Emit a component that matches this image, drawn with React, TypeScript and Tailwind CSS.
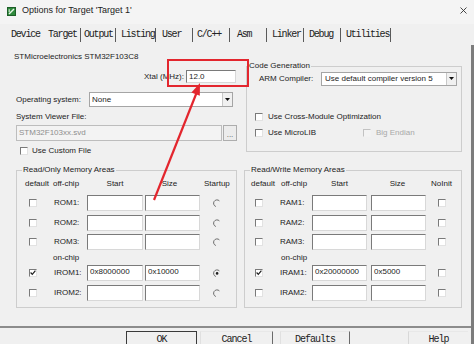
import clsx from 'clsx';

const SANS = "[font-family:'Liberation_Sans',Arial,sans-serif]";
const MONO = "[font-family:'Liberation_Mono','Courier_New',monospace]";

function Check({ checked, disabled }: { checked?: boolean; disabled?: boolean }) {
  return (
    <span
      className={clsx(
        'relative inline-block w-[8px] h-[8px] shrink-0 border',
        disabled
          ? 'border-t-[#c2c2c2] border-l-[#c2c2c2] border-r-[#f2f2f2] border-b-[#f2f2f2] bg-[#f3f3f3]'
          : 'border-t-[#7a7a7a] border-l-[#7a7a7a] border-r-[#e2e2e2] border-b-[#e2e2e2] bg-white'
      )}
    >
      {checked && (
        <svg className="absolute left-0 top-0" width="6" height="6" viewBox="0 0 6 6">
          <path d="M0.6 2.5 L2.3 4.4 L5.4 0.6" fill="none" stroke="#1f1f1f" strokeWidth="1.2" />
        </svg>
      )}
    </span>
  );
}

function Radio({ on }: { on?: boolean }) {
  return (
    <svg width="8" height="9" viewBox="0 0 8 9" className="shrink-0">
      <path d="M6.4 1.9 A3.4 3.4 0 1 0 2.84 7.5" fill="none" stroke="#6a6a6a" strokeWidth="1" />
      {on && <circle cx="4.1" cy="4.4" r="1.3" fill="#1f1f1f" />}
    </svg>
  );
}

function Field({ cls, value }: { cls: string; value?: string }) {
  return (
    <div
      className={clsx(
        cls,
        'h-[16px] shrink-0 bg-white border border-t-[#7a7a7a] border-l-[#7a7a7a] border-r-[#d8d8d8] border-b-[#d8d8d8] pl-[2px] leading-[12px] whitespace-nowrap overflow-hidden'
      )}
    >
      {value}
    </div>
  );
}

function Arrow() {
  return (
    <div className="w-[10px] h-full bg-[#f0f0f0] border-l border-[#c8c8c8] flex items-center justify-center">
      <svg width="5" height="3" viewBox="0 0 5 3">
        <path d="M0 0 H5 L2.5 3 Z" fill="#111" />
      </svg>
    </div>
  );
}

type RowData = {
  mt: string;
  name: string;
  start?: string;
  size?: string;
  def?: boolean;
  end?: boolean;
};

type GroupCfg = {
  box: string;
  legend: string;
  a: string;
  b: string;
  c: string;
  d: string;
  e: string;
  ha: string;
  hb: string;
  hd: string;
  he: string;
  ra: string;
  rb: string;
  re: string;
  last: string;
  radio: boolean;
  rows: RowData[];
  chip: RowData[];
};

function MemGroup({ g }: { g: GroupCfg }) {
  const row = (r: RowData) => (
    <div key={r.name} className={clsx('flex items-center h-[16px]', r.mt)}>
      <div className={clsx(g.a, g.ra, 'flex')}>
        <Check checked={r.def} />
      </div>
      <div className={clsx(g.b, g.rb)}>{r.name}</div>
      <Field cls={g.c} value={r.start} />
      <Field cls={g.d} value={r.size} />
      <div className={clsx(g.e, g.re, 'flex')}>{g.radio ? <Radio on={r.end} /> : <Check checked={r.end} />}</div>
    </div>
  );
  return (
    <fieldset className={clsx(g.box, 'border border-[#cdcdcd] p-0 m-0 pb-[6px]')}>
      <legend className="ml-[5px] px-[1px] h-[10px] leading-[10px]">{g.legend}</legend>
      <div className="flex h-[10px] leading-[10px] mt-[4px]">
        <div className={clsx(g.a, g.ha)}>default</div>
        <div className={clsx(g.b, g.hb)}>off-chip</div>
        <div className={clsx(g.c, 'text-center')}>Start</div>
        <div className={clsx(g.d, g.hd, 'text-center')}>Size</div>
        <div className={clsx(g.e, g.he)}>{g.last}</div>
      </div>
      {g.rows.map(row)}
      <div className="flex h-[10px] leading-[10px] mt-[3px]">
        <div className={g.a} />
        <div className={clsx(g.b, g.hb)}>on-chip</div>
      </div>
      {g.chip.map(row)}
    </fieldset>
  );
}

const roGroup: GroupCfg = {
  box: 'w-[221px]',
  legend: 'Read/Only Memory Areas',
  a: 'w-[34px] shrink-0',
  b: 'w-[36px] shrink-0',
  c: 'w-[56px]',
  d: 'w-[55px] ml-[2px]',
  e: 'w-[36px] shrink-0',
  ha: 'pl-[8px]',
  hb: 'pl-[2px]',
  hd: 'pr-[6px]',
  he: 'pl-[4px]',
  ra: 'pl-[12px]',
  rb: 'pl-[3px]',
  re: 'pl-[13px]',
  last: 'Startup',
  radio: true,
  rows: [
    { mt: 'mt-[6px]', name: 'ROM1:' },
    { mt: 'mt-[4px]', name: 'ROM2:' },
    { mt: 'mt-[3px]', name: 'ROM3:' },
  ],
  chip: [
    { mt: 'mt-[2px]', name: 'IROM1:', start: '0x8000000', size: '0x10000', def: true, end: true },
    { mt: 'mt-[4px]', name: 'IROM2:' },
  ],
};

const rwGroup: GroupCfg = {
  box: 'w-[218px]',
  legend: 'Read/Write Memory Areas',
  a: 'w-[31px] shrink-0',
  b: 'w-[36px] shrink-0',
  c: 'w-[55px]',
  d: 'w-[55px] ml-[4px]',
  e: 'w-[35px] shrink-0',
  ha: 'pl-[6px]',
  hb: 'pl-[5px]',
  hd: 'pr-[2px]',
  he: 'pl-[5px]',
  ra: 'pl-[10px]',
  rb: 'pl-[4px]',
  re: 'pl-[12px]',
  last: 'NoInit',
  radio: false,
  rows: [
    { mt: 'mt-[6px]', name: 'RAM1:' },
    { mt: 'mt-[4px]', name: 'RAM2:' },
    { mt: 'mt-[3px]', name: 'RAM3:' },
  ],
  chip: [
    { mt: 'mt-[2px]', name: 'IRAM1:', start: '0x20000000', size: '0x5000', def: true },
    { mt: 'mt-[4px]', name: 'IRAM2:' },
  ],
};

const tabs = [
  { label: 'Device', cls: 'w-[36px] pl-[3px]' },
  { label: 'Target', cls: 'w-[37px] pl-[4px] border-r border-[#5a5a5a]' },
  { label: 'Output', cls: 'w-[35px] pl-[3px] border-r border-[#5a5a5a]' },
  { label: 'Listing', cls: 'w-[40px] pl-[5px] border-r border-[#5a5a5a]' },
  { label: 'User', cls: 'w-[37px] pl-[6px] border-r border-[#5a5a5a]' },
  { label: 'C/C++', cls: 'w-[37px] pl-[4px] border-r border-[#5a5a5a]' },
  { label: 'Asm', cls: 'w-[37px] pl-[7px] border-r border-[#5a5a5a]' },
  { label: 'Linker', cls: 'w-[37px] pl-[5px] border-r border-[#5a5a5a]' },
  { label: 'Debug', cls: 'w-[37px] pl-[5px] border-r border-[#5a5a5a]' },
  { label: 'Utilities', cls: 'w-[50px] pl-[5px] border-r border-[#5a5a5a]' },
];

export default function App() {
  return (
    <div className={clsx(SANS, 'relative w-[474px] h-[344px] overflow-hidden bg-[#f0f0f0] text-[8px] text-[#1c1c1c]')}>
      {/* title bar */}
      <div className="h-[24px] flex items-center bg-[#f4f4f4]">
        <svg className="ml-[7px] mt-[-2px]" width="9" height="9" viewBox="0 0 9 9">
          <rect x="0.5" y="0.5" width="8" height="8" fill="#2f8a3c" stroke="#1d5e27" />
          <path d="M2 7 L7 2" stroke="#e8f5e8" strokeWidth="1.4" />
          <path d="M2.2 2.2 L2.2 5" stroke="#e8f5e8" strokeWidth="1" />
        </svg>
        <span className="ml-[6px] mt-[-3px] text-[9px] text-[#222]">Options for Target 'Target 1'</span>
        <svg className="ml-auto mr-[7px] mt-[-4px]" width="7" height="7" viewBox="0 0 7 7">
          <path d="M0.5 0.5 L6.5 6.5 M6.5 0.5 L0.5 6.5" stroke="#333" strokeWidth="0.9" />
        </svg>
      </div>

      {/* tabs */}
      <div className={clsx(MONO, 'h-[21px] flex items-center pl-[8px] text-[10px] tracking-[-1.2px] text-[#222]')}>
        {tabs.map((t) => (
          <div key={t.label} className={clsx(t.cls, 'h-[14px] leading-[14px] shrink-0')}>
            {t.label}
          </div>
        ))}
      </div>

      <div className="border-r-[3px] border-[#7c7c7c] h-[299px]">
        {/* upper section */}
        <div className="flex items-start h-[111px]">
          <div className="w-[221px] ml-[16px] shrink-0">
            <div className="mt-[6px] h-[12px] leading-[12px] ml-[-2px]">STMicroelectronics STM32F103C8</div>
            <div className="mt-[7px] h-[13px] flex items-center justify-end">
              <span className="mr-[2px]">Xtal (MHz):</span>
              <div className="w-[50px] h-[13px] mr-[1px] bg-white border border-t-[#7a7a7a] border-l-[#7a7a7a] border-r-[#d8d8d8] border-b-[#d8d8d8] pl-[2px] leading-[11px]">
                12.0
              </div>
            </div>
            <div className="mt-[9px] h-[15px] flex items-center">
              <span className="w-[73px] shrink-0">Operating system:</span>
              <div className="w-[144px] h-[15px] bg-white border border-[#a5a5a5] flex items-center">
                <span className="flex-1 pl-[2px]">None</span>
                <Arrow />
              </div>
            </div>
            <div className="mt-[5px] h-[10px] leading-[10px]">System Viewer File:</div>
            <div className="mt-[3px] h-[16px] flex">
              <div className="w-[206px] h-[16px] bg-[#f3f3f3] border border-[#bdbdbd] pl-[2px] leading-[14px] text-[#8e8e8e]">
                STM32F103xx.svd
              </div>
              <div className="w-[14px] h-[16px] ml-[1px] bg-[#ececec] border border-[#adadad] text-center leading-[18px] text-[#555]">
                ...
              </div>
            </div>
            <div className="mt-[5px] h-[10px] flex items-center pl-[4px]">
              <Check />
              <span className="ml-[4px]">Use Custom File</span>
            </div>
          </div>

          <fieldset className="ml-[9px] mt-[16px] w-[216px] border border-[#cdcdcd] p-0 m-0 pb-[13px]">
            <legend className="ml-[1px] px-[1px] h-[10px] leading-[10px]">Code Generation</legend>
            <div className="mt-[1px] h-[13px] flex items-center">
              <span className="w-[74px] pl-[12px] shrink-0">ARM Compiler:</span>
              <div className="w-[136px] h-[14px] bg-white border border-[#a5a5a5] flex items-center">
                <span className="flex-1 pl-[3px]">Use default compiler version 5</span>
                <Arrow />
              </div>
            </div>
            <div className="mt-[27px] h-[10px] flex items-center pl-[8px]">
              <Check />
              <span className="ml-[5px]">Use Cross-Module Optimization</span>
            </div>
            <div className="mt-[6px] h-[10px] flex items-center pl-[8px]">
              <div className="w-[108px] flex items-center shrink-0">
                <Check />
                <span className="ml-[5px]">Use MicroLIB</span>
              </div>
              <Check disabled />
              <span className="ml-[5px] text-[#a8a8a8]">Big Endian</span>
            </div>
          </fieldset>
        </div>

        {/* memory areas */}
        <div className="mt-[9px] flex items-start ml-[16px] gap-[7px]">
          <MemGroup g={roGroup} />
          <MemGroup g={rwGroup} />
        </div>

        <div className="mt-[18px] border-t-[2px] border-[#8c8c8c]" />

        {/* buttons */}
        <div className={clsx(MONO, 'mt-[3px] flex text-[10px] tracking-[-1px] text-[#222]')}>
          <div className="ml-[126px] w-[71px] h-[20px] border border-[#3a3a3a] text-center leading-[16px]">OK</div>
          <div className="ml-[3px] w-[73px] h-[20px] border border-t-[#e8e8e8] border-l-[#e0e0e0] border-r-[#6a6a6a] border-b-[#6a6a6a] text-center leading-[16px]">
            Cancel
          </div>
          <div className="ml-[7px] w-[70px] h-[20px] border border-t-[#e8e8e8] border-l-[#e0e0e0] border-r-[#6a6a6a] border-b-[#6a6a6a] text-center leading-[16px]">
            Defaults
          </div>
          <div className="ml-[58px] w-[60px] h-[20px] border border-t-[#e8e8e8] border-l-[#d8d8d8] border-r-0 border-b-[#6a6a6a] text-center leading-[16px]">
            Help
          </div>
        </div>
      </div>

      {/* red annotation overlay */}
      <div className="absolute left-[167px] top-[59px] w-[82px] h-[28px] border-2 border-[#e3262e] pointer-events-none" />
      <svg className="absolute left-0 top-0 pointer-events-none" width="474" height="344" viewBox="0 0 474 344">
        <line x1="154" y1="200" x2="196.5" y2="93" stroke="#e3262e" strokeWidth="2.2" />
        <polygon points="200,83 199.8,95.8 191.4,92.5" fill="#e3262e" />
      </svg>
    </div>
  );
}
